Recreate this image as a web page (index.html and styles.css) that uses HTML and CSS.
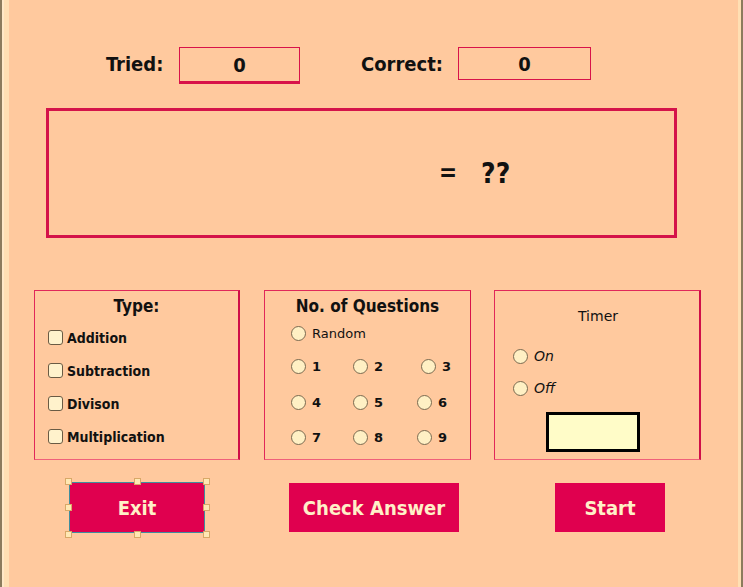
FILE: index.html
```html
<!DOCTYPE html>
<html lang="en">
<head>
  <meta charset="UTF-8">
  <title>Maths Quiz</title>
  <link rel="stylesheet" href="styles.css">
</head>
<body>
  <div class="window">

    <div class="scores">
      <span class="score-label tried-label">Tried:</span>
      <div class="score-box tried">0</div>
      <span class="score-label correct-label">Correct:</span>
      <div class="score-box correct">0</div>
    </div>

    <div class="question">
      <span class="equals">=</span>
      <span class="answer">??</span>
    </div>

    <div class="panels">
      <div class="panel type-panel">
        <div class="panel-title">Type:</div>
        <label class="check"><span class="box"></span>Addition</label>
        <label class="check"><span class="box"></span>Subtraction</label>
        <label class="check"><span class="box"></span>Divison</label>
        <label class="check"><span class="box"></span>Multiplication</label>
      </div>

      <div class="panel count-panel">
        <div class="panel-title">No. of Questions</div>
        <label class="radio random"><span class="dot"></span>Random</label>
        <div class="numbers">
          <label class="radio"><span class="dot"></span>1</label>
          <label class="radio"><span class="dot"></span>2</label>
          <label class="radio shift"><span class="dot"></span>3</label>
          <label class="radio"><span class="dot"></span>4</label>
          <label class="radio"><span class="dot"></span>5</label>
          <label class="radio"><span class="dot"></span>6</label>
          <label class="radio"><span class="dot"></span>7</label>
          <label class="radio"><span class="dot"></span>8</label>
          <label class="radio"><span class="dot"></span>9</label>
        </div>
      </div>

      <div class="panel timer-panel">
        <div class="timer-title">Timer</div>
        <label class="radio timer-opt"><span class="dot"></span><i>On</i></label>
        <label class="radio timer-opt"><span class="dot"></span><i>Off</i></label>
        <div class="timer-box"></div>
      </div>
    </div>

    <div class="actions">
      <div class="selected">
        <button class="btn exit">Exit</button>
        <span class="handle h1"></span><span class="handle h2"></span><span class="handle h3"></span>
        <span class="handle h4"></span><span class="handle h5"></span>
        <span class="handle h6"></span><span class="handle h7"></span><span class="handle h8"></span>
      </div>
      <button class="btn check-btn">Check Answer</button>
      <button class="btn start">Start</button>
    </div>

  </div>
</body>
</html>
```

FILE: styles.css
```css
html, body { margin: 0; padding: 0; background: #ffc99e; }
body { font-family: "DejaVu Sans Condensed", "DejaVu Sans", sans-serif; color: #111; }

.window {
  height: 587px;
  box-sizing: border-box;
  border-left: 2px solid #8c7b5c;
  border-right: 2px solid #8c7b5c;
  box-shadow: inset 2px 0 #ffe8c6, inset 7px 0 #ffdfb3, inset -3px 0 #ffdfb3;
  overflow: hidden;
}

/* score row */
.scores { display: flex; align-items: flex-start; padding-top: 47px; padding-left: 104px; }
.score-label { font-weight: bold; font-size: 20px; line-height: 34px; white-space: nowrap; }
.tried-label { width: 58px; }
.correct-label { width: 82px; margin-left: 61px; }
.score-box {
  box-sizing: border-box;
  border: 1px solid #d8124a;
  font-weight: bold; font-size: 20px;
  text-align: center; line-height: 34px;
}
.tried { width: 121px; height: 37px; margin-left: 15px; border-bottom-width: 3px; }
.correct { width: 133px; height: 33px; margin-left: 15px; line-height: 33px; }

/* question */
.question {
  box-sizing: border-box;
  width: 631px; height: 130px;
  margin: 24px 0 0 44px;
  border: 3px solid #d4134a;
  display: flex; align-items: center;
  padding-left: 390px;
  font-weight: bold; font-size: 28px;
}
.equals { font-size: 24px; }
.answer { margin-left: 24px; }

/* option panels */
.panels { display: flex; gap: 24px; margin: 52px 0 0 32px; }
.panel {
  box-sizing: border-box;
  width: 206px; height: 170px;
  border: 1px solid #e0285a;
  border-right: 2px solid #cf0f48;
  border-bottom-color: #f0607a;
}
.count-panel, .timer-panel { width: 207px; }
.count-panel { border-right: 1px solid #d8124a; }
.timer-panel { margin-left: -1px; }

.panel-title { text-align: center; font-weight: bold; font-size: 17px; margin-top: 5px; height: 22px; }

.check { display: flex; align-items: center; gap: 4px; margin: 8px 0 0 13px; height: 23px; font-weight: bold; font-size: 14px; }
.check + .check { margin-top: 10px; }
.box {
  width: 13px; height: 13px;
  border: 1px solid #6a5b44; border-radius: 3px;
  background: #fff2cc;
}

.radio { display: flex; align-items: center; gap: 6px; font-family: "DejaVu Sans", sans-serif; font-size: 13px; }
.dot {
  width: 13px; height: 13px;
  border: 1px solid #7a6a50; border-radius: 50%;
  background: #fff0c4;
}
.random { margin: 5px 0 0 26px; height: 20px; }
.numbers {
  display: grid;
  grid-template-columns: 62px 64px auto;
  grid-auto-rows: 35.5px;
  margin: 6px 0 0 26px;
  font-weight: bold;
}
.numbers .radio { font-weight: bold; }
.shift { margin-left: 4px; }

.timer-title { text-align: center; font-family: "DejaVu Sans", sans-serif; font-size: 14px; margin-top: 17px; padding-left: 2px; }
.timer-opt { margin-left: 18px; height: 20px; font-size: 14px; }
.timer-opt:first-of-type { margin-top: 22px; }
.timer-opt + .timer-opt { margin-top: 12px; }
.timer-box {
  box-sizing: border-box;
  width: 94px; height: 40px;
  margin: 14px 0 0 51px;
  border: 3px solid #000;
  background: #fffcc8;
}

/* buttons */
.actions { display: flex; align-items: flex-start; margin-top: 22px; }
.btn {
  border: none; padding: 0;
  background: #e0004f; color: #fff0c8;
  font-family: "DejaVu Sans Condensed", "DejaVu Sans", sans-serif;
  font-weight: bold; font-size: 20px;
}
.selected { position: relative; margin-left: 67px; }
.exit { width: 136px; height: 51px; border: 1px solid #3f8e9e; display: block; }
.check-btn { width: 170px; height: 49px; margin: 1px 0 0 84px; }
.start { width: 110px; height: 49px; margin: 1px 0 0 96px; }

.handle {
  position: absolute;
  width: 5px; height: 5px;
  border: 1px solid #d8a868;
  background: #ffe8b4;
}
.h1 { left: -4px; top: -4px; }
.h2 { left: 65px; top: -4px; }
.h3 { left: 134px; top: -4px; }
.h4 { left: -4px; top: 22px; }
.h5 { left: 134px; top: 22px; }
.h6 { left: -4px; top: 49px; }
.h7 { left: 65px; top: 49px; }
.h8 { left: 134px; top: 49px; }
```
